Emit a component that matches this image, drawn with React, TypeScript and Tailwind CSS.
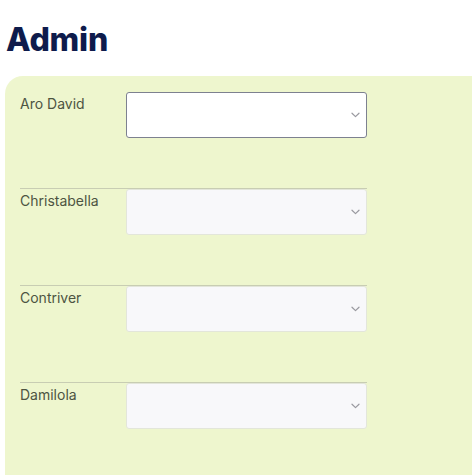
import React from 'react';

const users = ['Aro David', 'Christabella', 'Contriver', 'Damilola'];

const Chevron = () => (
    <svg width="9" height="6" viewBox="0 0 9 6" fill="none" className="absolute right-[7px] top-1/2 -translate-y-1/2">
        <path d="M1 1.2L4.5 4.6L8 1.2" stroke="#9a9aa0" strokeWidth="1.2" strokeLinecap="round" strokeLinejoin="round" />
    </svg>
);

export default function App() {
    return (
        <div className="min-h-[475px] bg-white font-['Inter',sans-serif]">
            <h1 className="pl-[6px] pt-[20px] text-[32px] font-extrabold leading-[40px] tracking-[-0.2px] text-[#0e1b4c]">Admin</h1>
            <div className="ml-[5px] mr-[2px] mt-[16px] rounded-tl-[18px] bg-[#eef6ce] pl-[15px] pt-[16px]">
                {users.map((name, i) => (
                    <div
                        key={name}
                        className={`grid w-[347px] grid-cols-[106px_241px] pb-[50px] ${i === 0 ? '' : 'border-t border-[#c8cdb3]'}`}
                    >
                        <div className="pt-[2px] text-[14px] leading-[20px] text-[#4d5442]">{name}</div>
                        <div className="relative">
                            <select
                                className={`block h-[46px] w-full appearance-none rounded-[3px] border ${
                                    i === 0 ? 'border-[#7d8190] bg-white' : 'border-[#e3e6da] bg-[#f8f8fa]'
                                }`}
                            />
                            <Chevron />
                        </div>
                    </div>
                ))}
            </div>
        </div>
    );
}
